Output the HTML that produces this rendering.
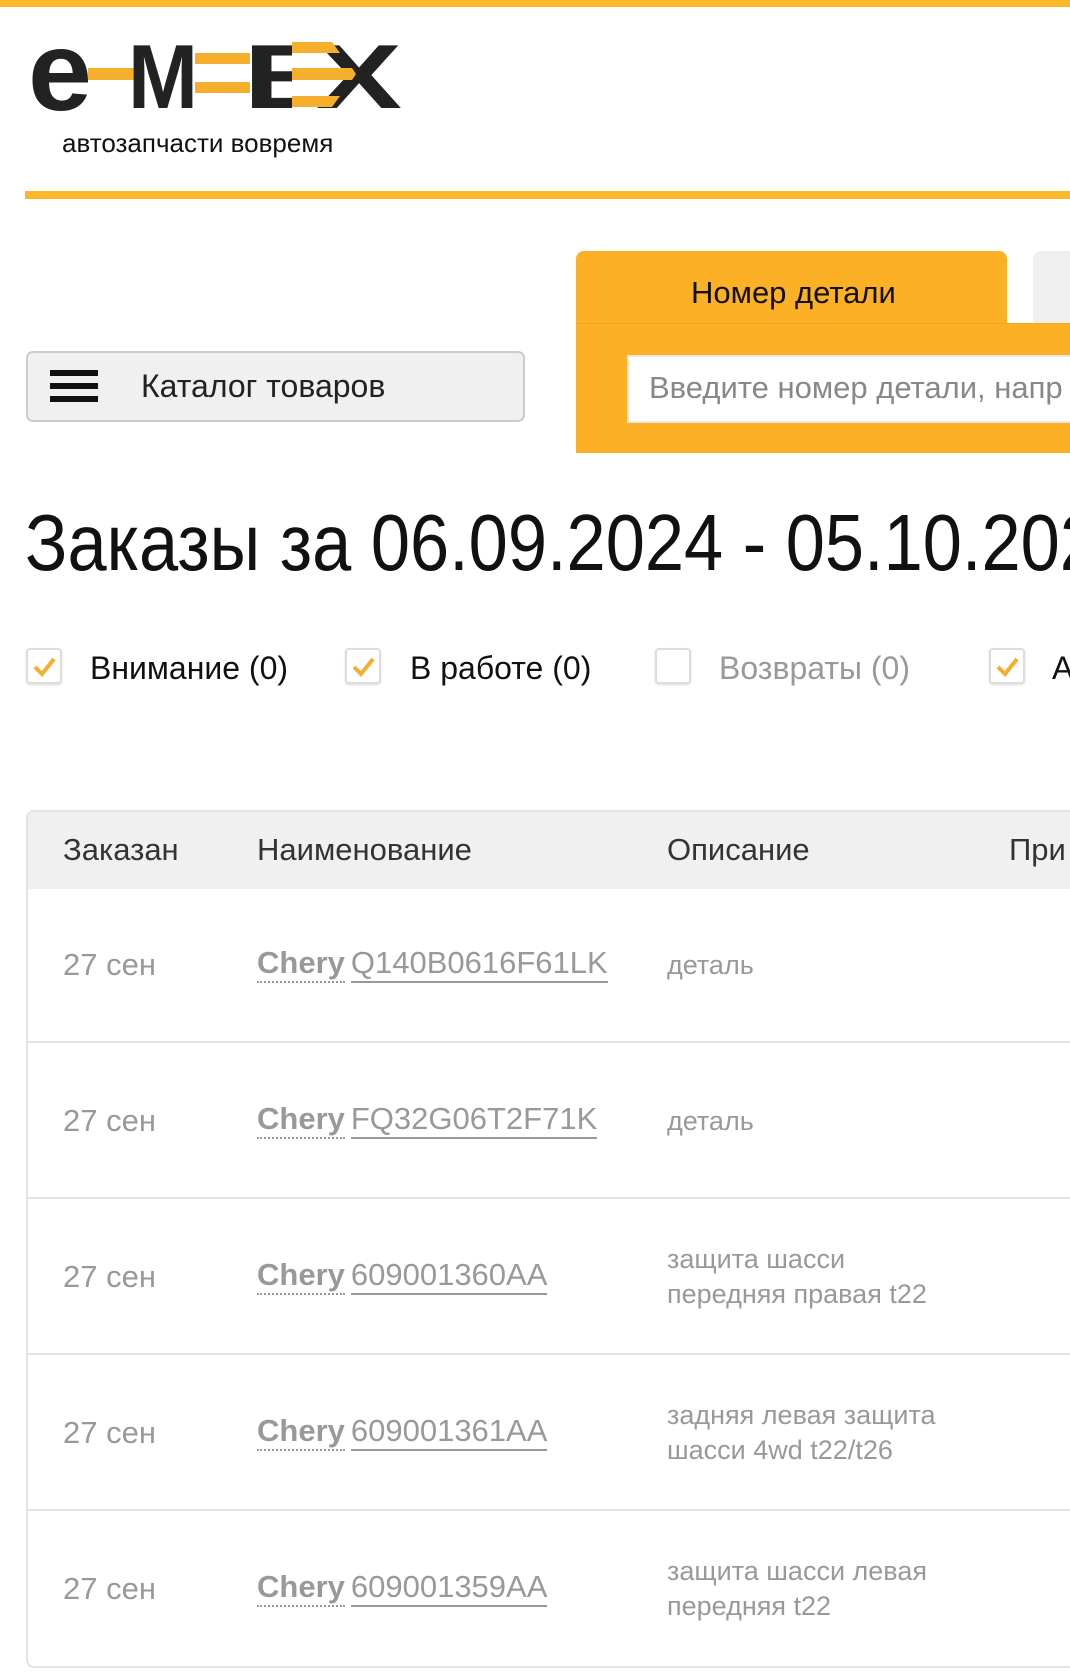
<!DOCTYPE html>
<html><head><meta charset="utf-8"><style>
*{margin:0;padding:0;box-sizing:border-box}
html,body{width:1070px;height:1672px;overflow:hidden;background:#fff;font-family:"Liberation Sans",sans-serif;position:relative}
.a{position:absolute}
.cb{position:absolute;top:648px;width:36px;height:36px;border:2px solid #ddd;border-radius:4px;background:#fff;box-shadow:0 1px 2px rgba(0,0,0,.15)}
.cb svg{position:absolute;left:4px;top:6px}
.lbl{position:absolute;top:650px;font-size:32px;color:#111;line-height:36px}
.th{position:absolute;top:832px;font-size:31px;color:#333;line-height:36px}
.row{position:absolute;left:26px;width:1060px;height:156px;border-bottom:2px solid #e3e3e3}
.d{position:absolute;left:37px;top:60px;font-size:31px;color:#999;line-height:36px}
.n{position:absolute;left:231px;top:58px;font-size:31px;color:#999;line-height:36px;white-space:nowrap}
.n b{border-bottom:2px dotted #999;padding-bottom:1px}
.n span{border-bottom:2px solid #999;margin-left:6px;padding-bottom:1px}
.ds{position:absolute;left:641px;font-size:27px;color:#999;line-height:35px}
</style></head><body>
<div class="a" style="left:0;top:0;width:1070px;height:7px;background:#fbb829"></div>
<svg class="a" style="left:0;top:0" width="420" height="120" viewBox="0 0 420 120">
<defs><clipPath id="ce"><rect x="240" y="30" width="52" height="90"/></clipPath></defs>
<rect x="88" y="68" width="48" height="12" fill="#f6ae2d"/>
<rect x="195" y="53" width="55" height="11" fill="#f6ae2d"/>
<rect x="195" y="82" width="55" height="11" fill="#f6ae2d"/>
<text x="28" y="110" font-family="Liberation Sans" font-weight="bold" font-size="113" fill="#222" textLength="64" lengthAdjust="spacingAndGlyphs">e</text>
<text x="128" y="108" font-family="Liberation Sans" font-weight="bold" font-size="91" fill="#222" textLength="70" lengthAdjust="spacingAndGlyphs">M</text>
<text x="243" y="108" font-family="Liberation Sans" font-weight="bold" font-size="91" fill="#222" textLength="90" lengthAdjust="spacingAndGlyphs" clip-path="url(#ce)">E</text>
<text x="316" y="108" font-family="Liberation Sans" font-weight="bold" font-size="91" fill="#222" textLength="86" lengthAdjust="spacingAndGlyphs">X</text>
<polygon points="292,42 332,42 340,53 292,53" fill="#f6ae2d"/>
<polygon points="292,68 352,68 356,74 352,80 292,80" fill="#f6ae2d"/>
<polygon points="292,96 340,96 332,107 292,107" fill="#f6ae2d"/>
</svg>
<div class="a" style="left:62px;top:128px;font-size:26px;color:#111">автозапчасти вовремя</div>
<div class="a" style="left:25px;top:191px;width:1045px;height:8px;background:#fbb829"></div>

<div class="a" style="left:576px;top:251px;width:431px;height:74px;background:#fbb025;border-radius:8px 8px 0 0"></div>
<div class="a" style="left:1033px;top:251px;width:60px;height:72px;background:#f0f0f0;border-radius:8px 0 0 0"></div>
<div class="a" style="left:691px;top:275px;font-size:31px;color:#111">Номер детали</div>
<div class="a" style="left:576px;top:323px;width:494px;height:130px;background:#fbb025;border-top:1px solid #f3a51c"></div>
<div class="a" style="left:627px;top:355px;width:443px;height:68px;background:#fff;border:2px solid #e8e8e8;border-right:none"></div>
<div class="a" style="left:649px;top:370px;width:421px;overflow:hidden;font-size:31px;color:#888;white-space:nowrap">Введите номер детали, напр</div>

<div class="a" style="left:26px;top:351px;width:499px;height:71px;background:#f0f0f0;border:2px solid #ccc;border-radius:7px"></div>
<div class="a" style="left:50px;top:370px;width:48px;height:6px;background:#111"></div>
<div class="a" style="left:50px;top:383px;width:48px;height:6px;background:#111"></div>
<div class="a" style="left:50px;top:396px;width:48px;height:6px;background:#111"></div>
<div class="a" style="left:141px;top:368px;font-size:32px;color:#222">Каталог товаров</div>

<div class="a" style="left:25px;top:498px;width:1045px;height:100px;overflow:hidden"><div style="font-size:80px;color:#111;white-space:nowrap;transform:scaleX(0.88);transform-origin:left top;line-height:90px">Заказы за 06.09.2024 - 05.10.2024</div></div>

<div class="cb" style="left:26px"><svg width="26" height="22"><path d="M3 11 L10 18 L22 3" stroke="#f6ae2d" stroke-width="4" fill="none"/></svg></div>
<div class="lbl" style="left:90px">Внимание (0)</div>
<div class="cb" style="left:345px"><svg width="26" height="22"><path d="M3 11 L10 18 L22 3" stroke="#f6ae2d" stroke-width="4" fill="none"/></svg></div>
<div class="lbl" style="left:410px">В работе (0)</div>
<div class="cb" style="left:655px"></div>
<div class="lbl" style="left:719px;color:#999">Возвраты (0)</div>
<div class="cb" style="left:989px"><svg width="26" height="22"><path d="M3 11 L10 18 L22 3" stroke="#f6ae2d" stroke-width="4" fill="none"/></svg></div>
<div class="lbl" style="left:1052px">А</div>

<div class="a" style="left:26px;top:810px;width:1044px;height:858px;overflow:hidden">
<div style="width:1060px;height:858px;border:2px solid #e3e3e3;border-radius:8px;overflow:hidden"><div style="height:77px;background:#f0f0f0"></div></div>
<div class="th" style="left:37px;top:22px">Заказан</div>
<div class="th" style="left:231px;top:22px">Наименование</div>
<div class="th" style="left:641px;top:22px">Описание</div>
<div class="th" style="left:983px;top:22px">При</div>
<div class="row" style="left:0;top:77px"><div class="d">27 сен</div><div class="n"><b>Chery</b><span>Q140B0616F61LK</span></div><div class="ds" style="top:61px">деталь</div></div>
<div class="row" style="left:0;top:233px"><div class="d">27 сен</div><div class="n"><b>Chery</b><span>FQ32G06T2F71K</span></div><div class="ds" style="top:61px">деталь</div></div>
<div class="row" style="left:0;top:389px"><div class="d">27 сен</div><div class="n"><b>Chery</b><span>609001360AA</span></div><div class="ds" style="top:43px">защита шасси<br>передняя правая t22</div></div>
<div class="row" style="left:0;top:545px"><div class="d">27 сен</div><div class="n"><b>Chery</b><span>609001361AA</span></div><div class="ds" style="top:43px">задняя левая защита<br>шасси 4wd t22/t26</div></div>
<div class="row" style="left:0;top:701px;border-bottom:none"><div class="d">27 сен</div><div class="n"><b>Chery</b><span>609001359AA</span></div><div class="ds" style="top:43px">защита шасси левая<br>передняя t22</div></div>
</div>
</body></html>
